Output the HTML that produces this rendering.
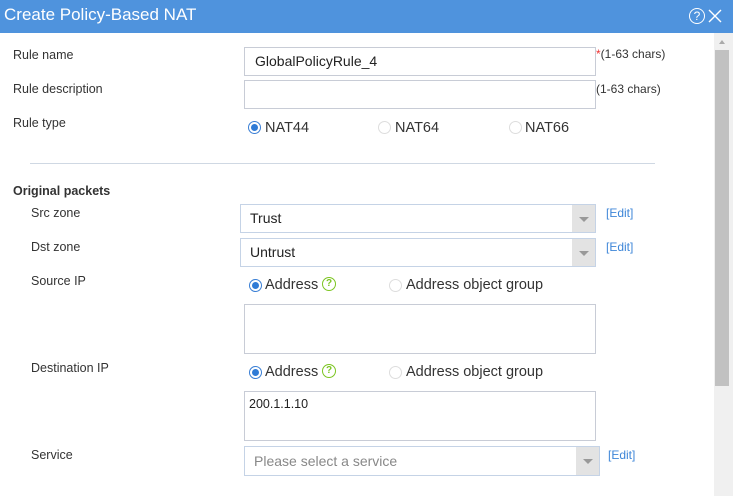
<!DOCTYPE html>
<html><head><style>
*{box-sizing:border-box;margin:0;padding:0}
body{width:733px;height:496px;overflow:hidden;background:#fff;font-family:"Liberation Sans",sans-serif;position:relative;color:#333}
.a{position:absolute}
.hd{left:0;top:0;width:733px;height:33px;background:#4f93dd;color:#fff;font-size:17px;line-height:30px;padding-left:4px}
.lb{font-size:12.5px;color:#333}
.in{border:1px solid #c8ccd6;background:#fff;font-size:14px;color:#222;padding-left:10px}
.sel{border:1px solid #c5d3e6;background:#fff;font-size:14px;color:#222;padding-left:9px}
.arr{position:absolute;right:0;top:0;width:23px;height:100%;background:#e3e3e3}
.arr:after{content:"";position:absolute;left:7px;top:12px;border-left:5px solid transparent;border-right:5px solid transparent;border-top:5px solid #999}
.rd{width:13px;height:13px;border-radius:50%;border:1px solid #ddd;background:#fff}
.rd.on{border:1px solid #3a7fd5}
.rd.on:after{content:"";position:absolute;left:2px;top:2px;width:7px;height:7px;border-radius:50%;background:#2f7bd6}
.rt{font-size:14.5px;color:#333}
.ed{font-size:12px;color:#3e86d8}
.q{width:14px;height:14px;border:1.5px solid #7cc522;border-radius:50%;color:#7cc522;font-size:10px;font-weight:bold;text-align:center;line-height:11px}
</style></head><body>
<div class="a hd">Create Policy-Based NAT</div>
<div class="a" style="left:689px;top:8px;width:16px;height:16px;border:1.3px solid #fff;border-radius:50%;color:#fff;font-size:12px;text-align:center;line-height:14px">?</div>
<svg class="a" style="left:708px;top:9px" width="14" height="14"><path d="M1 1L13 13M13 1L1 13" stroke="#fff" stroke-width="1.4"/></svg>

<div class="a" style="left:714px;top:33px;width:19px;height:463px;background:#f0f0f0"></div>
<div class="a" style="left:719px;top:40px;border-left:3px solid transparent;border-right:3px solid transparent;border-bottom:4px solid #aaa"></div>
<div class="a" style="left:715px;top:50px;width:14px;height:336px;background:#c1c1c1"></div>

<div class="a lb" style="left:13px;top:48px">Rule name</div>
<div class="a in" style="left:244px;top:47px;width:352px;height:29px;line-height:27px">GlobalPolicyRule_4</div>
<div class="a" style="left:596px;top:47px;font-size:12px"><span style="color:#e33">*</span>(1-63 chars)</div>
<div class="a lb" style="left:13px;top:82px">Rule description</div>
<div class="a in" style="left:244px;top:80px;width:352px;height:29px"></div>
<div class="a" style="left:596px;top:82px;font-size:12px">(1-63 chars)</div>
<div class="a lb" style="left:13px;top:116px">Rule type</div>
<div class="a rd on" style="left:248px;top:121px"></div><div class="a rt" style="left:265px;top:120px">NAT44</div>
<div class="a rd" style="left:378px;top:121px"></div><div class="a rt" style="left:395px;top:120px">NAT64</div>
<div class="a rd" style="left:509px;top:121px"></div><div class="a rt" style="left:525px;top:120px">NAT66</div>

<div class="a" style="left:30px;top:163px;width:625px;height:1px;background:#cfd8e3"></div>
<div class="a" style="left:13px;top:184px;font-size:12.5px;font-weight:bold;color:#333">Original packets</div>

<div class="a lb" style="left:31px;top:206px">Src zone</div>
<div class="a sel" style="left:240px;top:204px;width:356px;height:29px;line-height:27px">Trust<div class="arr"></div></div>
<div class="a ed" style="left:606px;top:206px">[Edit]</div>
<div class="a lb" style="left:31px;top:240px">Dst zone</div>
<div class="a sel" style="left:240px;top:238px;width:356px;height:29px;line-height:27px">Untrust<div class="arr"></div></div>
<div class="a ed" style="left:606px;top:240px">[Edit]</div>

<div class="a lb" style="left:31px;top:274px">Source IP</div>
<div class="a rd on" style="left:249px;top:279px"></div><div class="a rt" style="left:265px;top:277px">Address</div>
<div class="a q" style="left:322px;top:277px">?</div>
<div class="a rd" style="left:389px;top:279px"></div><div class="a rt" style="left:406px;top:277px">Address object group</div>
<div class="a in" style="left:244px;top:304px;width:352px;height:50px"></div>

<div class="a lb" style="left:31px;top:361px">Destination IP</div>
<div class="a rd on" style="left:249px;top:366px"></div><div class="a rt" style="left:265px;top:364px">Address</div>
<div class="a q" style="left:322px;top:364px">?</div>
<div class="a rd" style="left:389px;top:366px"></div><div class="a rt" style="left:406px;top:364px">Address object group</div>
<div class="a in" style="left:244px;top:391px;width:352px;height:50px;font-size:12.5px;padding:5px 0 0 4px">200.1.1.10</div>

<div class="a lb" style="left:31px;top:448px">Service</div>
<div class="a sel" style="left:244px;top:446px;width:356px;height:30px;line-height:28px;color:#888">Please select a service<div class="arr"></div></div>
<div class="a ed" style="left:608px;top:448px">[Edit]</div>
</body></html>
